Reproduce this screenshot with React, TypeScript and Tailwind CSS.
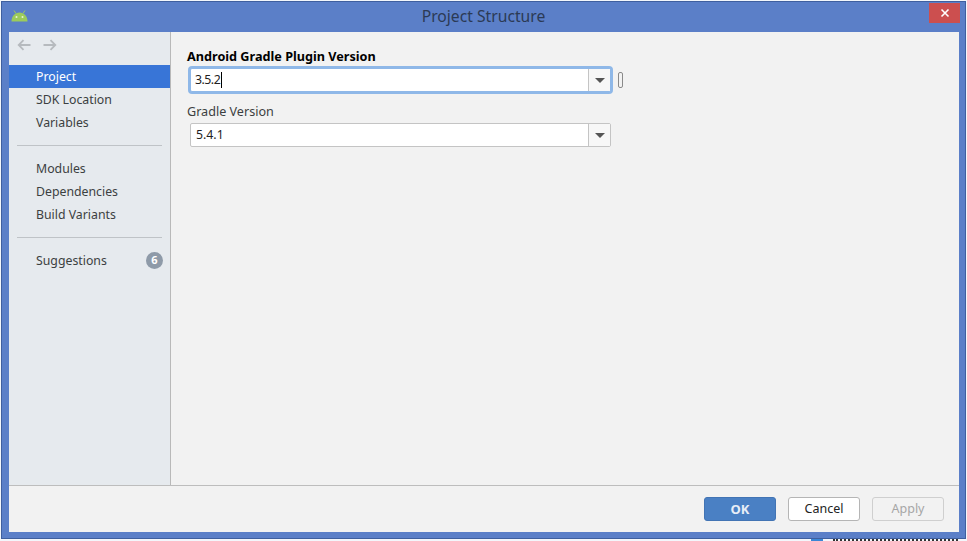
function NavItem({ label, selected, badge }: { label: string; selected?: boolean; badge?: string }) {
  return (
    <div className={`flex h-[23px] items-center justify-between pl-[27px] pr-[7px] text-[12.3px] ${selected ? 'bg-[#3875d7] text-white' : 'text-[#3c3f41]'}`}>
      <span className="pt-[2px]">{label}</span>
      {badge && (
        <span className="flex h-[17px] w-[17px] items-center justify-center rounded-full bg-[#8e9aa8] text-[11px] font-bold text-white">
          {badge}
        </span>
      )}
    </div>
  )
}

function Combo({ value, focused }: { value: string; focused?: boolean }) {
  return (
    <div className={`flex h-[24px] w-[421px] rounded-[2px] border bg-white ${focused ? 'border-[#8fb8e8] shadow-[0_0_0_2px_#8fb8e8]' : 'border-[#c4c4c4]'}`}>
      <div className={`flex flex-1 items-center text-[12.3px] text-[#222] ${focused ? 'pl-[4px] tracking-[-0.5px]' : 'pl-[5px]'}`}>
        {value}
        {focused && <span className="ml-[1px] h-[16px] w-px bg-black" />}
      </div>
      <div className="flex w-[22px] items-center justify-center border-l border-[#c4c4c4] bg-[#f7f7f7]">
        <span className="h-0 w-0 border-x-[5px] border-t-[5px] border-x-transparent border-t-[#555]" />
      </div>
    </div>
  )
}

function NavArrow({ flip }: { flip?: boolean }) {
  return (
    <svg width="14" height="12" viewBox="0 0 14 12" className={flip ? 'rotate-180' : ''}>
      <path d="M13.500 6H2M6.500 1.200L1.700 6l4.800 4.800" fill="none" stroke="#b6babe" strokeWidth="1.800" />
    </svg>
  )
}

export default function App() {
  return (
    <div className="h-[541px] w-[967px] overflow-hidden bg-[#f3f6fb] pl-px pt-px font-['Noto_Sans',sans-serif]">
      <div className="flex h-[538px] w-[965px] flex-col border border-[#3f5f9f] bg-[#5b7fc8]">
        {/* title bar */}
        <div className="flex h-[30px] shrink-0 items-start">
          <div className="w-[30px] pl-[9px] pt-[8px]">
            <svg width="17" height="12" viewBox="0 0 17 12">
              <path d="M3 0.500l2 3M14 0.500l-2 3" stroke="#9ccb5b" strokeWidth="1" />
              <path d="M0.500 11.500C0.500 6 4 2.500 8.500 2.500s8 3.500 8 9z" fill="#9ccb5b" />
              <circle cx="5.500" cy="7" r="1" fill="#e8f3d4" />
              <circle cx="11.500" cy="7" r="1" fill="#e8f3d4" />
            </svg>
          </div>
          <div className="flex-1 pl-[6px] pt-[3px] text-center text-[15.7px] text-[#2b3a55]">Project Structure</div>
          <div className="mr-[5px] mt-px flex h-[20px] w-[31px] items-center justify-center bg-[#cc4f4f]">
            <svg width="10" height="10" viewBox="0 0 10 10">
              <path d="M1.500 1.500l7 7M8.500 1.500l-7 7" stroke="#fff" strokeWidth="1.600" />
            </svg>
          </div>
        </div>

        {/* body */}
        <div className="mx-[7px] flex w-[950px] flex-1 flex-col bg-[#f2f2f2]">
          <div className="flex flex-1">
            <aside className="w-[162px] shrink-0 border-r border-[#b9b9b9] bg-[#e6eaee]">
              <div className="flex h-[33px] items-start gap-[12px] pl-[8px] pt-[7px]">
                <NavArrow />
                <NavArrow flip />
              </div>
              <NavItem label="Project" selected />
              <NavItem label="SDK Location" />
              <NavItem label="Variables" />
              <div className="mx-[8px] my-[11px] h-px bg-[#bfc3c7]" />
              <NavItem label="Modules" />
              <NavItem label="Dependencies" />
              <NavItem label="Build Variants" />
              <div className="mx-[8px] my-[11px] h-px bg-[#bfc3c7]" />
              <NavItem label="Suggestions" badge="6" />
            </aside>
            <main className="flex-1 pl-[16px] pt-[15px]">
              <div className="text-[12.66px] leading-[18px] font-bold text-black">Android Gradle Plugin Version</div>
              <div className="ml-[3px] mt-[3px] flex items-center gap-[6px]">
                <Combo value="3.5.2" focused />
                <span className="ml-[1px] h-[16px] w-[5px] rounded-[2px] border border-[#8a8a8a]" />
              </div>
              <div className="mt-[11px] text-[12.6px] leading-[18px] text-[#3c3f41]">Gradle Version</div>
              <div className="ml-[3px] mt-[2px]">
                <Combo value="5.4.1" />
              </div>
            </main>
          </div>
          <footer className="flex h-[47px] shrink-0 items-start justify-end gap-[12px] border-t border-[#bdbdbd] pr-[15px] pt-[11px]">
            <button className="h-[24px] w-[72px] rounded-[3px] border border-[#4274b4] bg-[#4a80c4] pt-px text-[13px] font-bold text-[#e8eef7]">OK</button>
            <button className="h-[24px] w-[72px] rounded-[3px] border border-[#b5b5b5] bg-white pt-px text-[12.5px] text-[#222]">Cancel</button>
            <button className="h-[24px] w-[72px] rounded-[3px] border border-[#cfcfcf] bg-[#f2f2f2] pt-px text-[12.5px] text-[#a6a6a6]">Apply</button>
          </footer>
        </div>
        <div className="h-[6px] shrink-0" />
      </div>
      {/* what shows of the window behind, below the dialog */}
      <div className="flex h-[2px] items-stretch pl-[810px]">
        <span className="w-[12px] bg-[#3a86d6]" />
        <span className="ml-[10px] w-[125px] border-t-2 border-dotted border-[#333]" />
      </div>
    </div>
  )
}
